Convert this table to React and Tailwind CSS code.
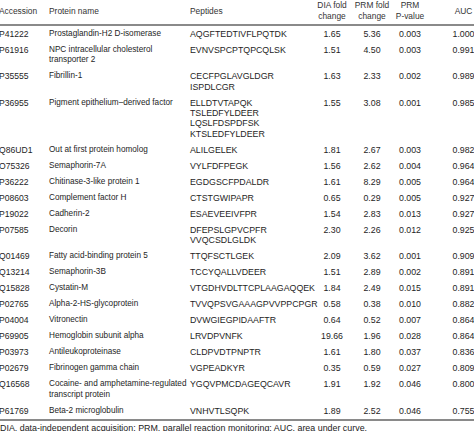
import React from "react";

const rows = [
  ["P41222", ["Prostaglandin-H2 D-isomerase"], ["AQGFTEDTIVFLPQTDK"], "1.65", "5.36", "0.003", "1.000"],
  ["P61916", ["NPC intracellular cholesterol", "transporter 2"], ["EVNVSPCPTQPCQLSK"], "1.51", "4.50", "0.003", "0.991"],
  ["P35555", ["Fibrillin-1"], ["CECFPGLAVGLDGR", "ISPDLCGR"], "1.63", "2.33", "0.002", "0.989"],
  ["P36955", ["Pigment epithelium–derived factor"], ["ELLDTVTAPQK", "TSLEDFYLDEER", "LQSLFDSPDFSK", "KTSLEDFYLDEER"], "1.55", "3.08", "0.001", "0.985"],
  ["Q86UD1", ["Out at first protein homolog"], ["ALILGELEK"], "1.81", "2.67", "0.003", "0.982"],
  ["O75326", ["Semaphorin-7A"], ["VYLFDFPEGK"], "1.56", "2.62", "0.004", "0.964"],
  ["P36222", ["Chitinase-3-like protein 1"], ["EGDGSCFPDALDR"], "1.61", "8.29", "0.005", "0.964"],
  ["P08603", ["Complement factor H"], ["CTSTGWIPAPR"], "0.65", "0.29", "0.005", "0.927"],
  ["P19022", ["Cadherin-2"], ["ESAEVEEIVFPR"], "1.54", "2.83", "0.013", "0.927"],
  ["P07585", ["Decorin"], ["DFEPSLGPVCPFR", "VVQCSDLGLDK"], "2.30", "2.26", "0.012", "0.925"],
  ["Q01469", ["Fatty acid-binding protein 5"], ["TTQFSCTLGEK"], "2.09", "3.62", "0.001", "0.909"],
  ["Q13214", ["Semaphorin-3B"], ["TCCYQALLVDEER"], "1.51", "2.89", "0.002", "0.891"],
  ["Q15828", ["Cystatin-M"], ["VTGDHVDLTTCPLAAGAQQEK"], "1.84", "2.49", "0.015", "0.891"],
  ["P02765", ["Alpha-2-HS-glycoprotein"], ["TVVQPSVGAAAGPVVPPCPGR"], "0.58", "0.38", "0.010", "0.882"],
  ["P04004", ["Vitronectin"], ["DVWGIEGPIDAAFTR"], "0.64", "0.52", "0.007", "0.864"],
  ["P69905", ["Hemoglobin subunit alpha"], ["LRVDPVNFK"], "19.66", "1.96", "0.028", "0.864"],
  ["P03973", ["Antileukoproteinase"], ["CLDPVDTPNPTR"], "1.61", "1.80", "0.037", "0.836"],
  ["P02679", ["Fibrinogen gamma chain"], ["VGPEADKYR"], "0.35", "0.59", "0.027", "0.809"],
  ["Q16568", ["Cocaine- and amphetamine-regulated", "transcript protein"], ["YGQVPMCDAGEQCAVR"], "1.91", "1.92", "0.046", "0.800"],
  ["P61769", ["Beta-2 microglobulin"], ["VNHVTLSQPK"], "1.89", "2.52", "0.046", "0.755"],
];

function Lines({ items }) {
  return items.map((t, i) => <div key={i}>{t}</div>);
}

const cell = "align-top px-0 py-[2.8px]";
const num = "align-top text-center px-0 py-[2.8px] text-[8.8px]";

export default function App() {
  return (
    <div className="w-[474px] h-[431px] overflow-hidden bg-white text-[#1e1e1e] font-['Liberation_Sans',Arial,sans-serif] text-[8.2px]">
      <table className="table-fixed border-collapse w-[500px] -ml-px">
        <colgroup>
          <col className="w-[50px]" />
          <col className="w-[141px]" />
          <col className="w-[122px]" />
          <col className="w-[40px]" />
          <col className="w-[40px]" />
          <col className="w-[36px]" />
          <col className="w-[71px]" />
        </colgroup>
        <thead>
          <tr className="border-b-2 border-[#8a8a8a] text-[#333] text-[8.4px] leading-[11px] h-[24px]">
            <th className="text-left font-normal align-middle p-0 pb-[2px]">Accession</th>
            <th className="text-left font-normal align-middle p-0 pb-[2px]">Protein name</th>
            <th className="text-left font-normal align-middle p-0 pb-[2px]">Peptides</th>
            <th className="text-center font-normal align-middle p-0 pb-[2px]">DIA fold<br />change</th>
            <th className="text-center font-normal align-middle p-0 pb-[2px]">PRM fold<br />change</th>
            <th className="text-center font-normal align-middle p-0 pb-[2px]">PRM<br />P-value</th>
            <th className="text-center font-normal align-middle p-0 pb-[2px]">AUC</th>
          </tr>
        </thead>
        <tbody className="leading-[10.4px]">
          {rows.map((r, i) => (
            <tr key={r[0]} className={i === rows.length - 1 ? "border-b-2 border-[#8a8a8a]" : ""}>
              <td className={cell + " text-[8.6px]"}>{r[0]}</td>
              <td className={cell}><Lines items={r[1]} /></td>
              <td className={cell + " text-[8.8px]"}><Lines items={r[2]} /></td>
              <td className={num}>{r[3]}</td>
              <td className={num}>{r[4]}</td>
              <td className={num}>{r[5]}</td>
              <td className={num}>{r[6]}</td>
            </tr>
          ))}
        </tbody>
      </table>
      <p className="mt-[2px] leading-[10px] text-[8.9px] text-[#222]">
        DIA, data-independent acquisition; PRM, parallel reaction monitoring; AUC, area under curve.
      </p>
    </div>
  );
}
